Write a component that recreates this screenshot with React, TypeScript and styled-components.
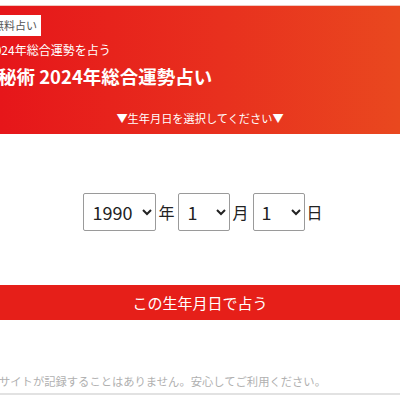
import React from "react"
import styled, { createGlobalStyle } from "styled-components"

const years = Array.from({ length: 100 }, (_, i) => 1930 + i)
const months = Array.from({ length: 12 }, (_, i) => i + 1)
const days = Array.from({ length: 31 }, (_, i) => i + 1)

const GlobalStyle = createGlobalStyle`
  html, body {
    margin: 0;
    padding: 0;
    background: #fff;
    font-family: "Noto Sans CJK JP", "Liberation Sans", sans-serif;
    overflow: hidden;
  }
`

const Page = styled.div`
  width: 400px;
  height: 400px;
  padding-top: 5px;
  box-sizing: border-box;
  display: flex;
  flex-direction: column;
`

const Header = styled.header`
  height: 129px;
  border-top: 1px solid #f0c8c0;
  background: linear-gradient(90deg, #e6161a 0%, #e8301e 55%, #e9481f 100%);
  color: #fff;
  display: flex;
  flex-direction: column;
  box-sizing: border-box;
  padding-top: 9px;
`

const Tag = styled.span`
  align-self: flex-start;
  margin-left: -11px;
  background: #fff;
  color: #555;
  font-size: 11px;
  line-height: 21px;
  padding: 0 4px;
`

const Sub = styled.p`
  margin: 5px 0 0 -12px;
  font-size: 12px;
  line-height: 18px;
`

const Title = styled.h1`
  margin: 4px 0 0 -2px;
  font-size: 18.5px;
  font-weight: 700;
  line-height: 26px;
`

const Guide = styled.p`
  margin: auto 0 7px;
  text-align: center;
  font-size: 11.2px;
  line-height: 18px;
`

const Form = styled.div`
  height: 151px;
  display: flex;
  align-items: center;
  justify-content: center;
  gap: 2px;
  padding-left: 8px;
  padding-top: 4px;
  box-sizing: border-box;
  font-size: 16px;
  color: #222;
`

const Select = styled.select<{ $w: number }>`
  width: ${(p) => p.$w}px;
  height: 38px;
  font-size: 18px;
  font-family: "Noto Sans CJK JP", "Liberation Sans", sans-serif;
  color: #222;
  border: 1px solid #9a9a9a;
  border-radius: 2px;
  background: #fff;
  padding: 0 4px;
`

const Unit = styled.span`
  margin-right: 2px;
`

const Button = styled.button`
  height: 35px;
  border: none;
  background: #e61f19;
  color: #fff;
  font-family: "Noto Sans CJK JP", "Liberation Sans", sans-serif;
  font-size: 15px;
  padding: 0;
`

const Note = styled.p`
  margin: 53px 0 0 -1px;
  padding-bottom: 4px;
  border-bottom: 2px solid #e2e2e2;
  font-size: 11.3px;
  line-height: 16px;
  color: #b0b0b0;
  white-space: nowrap;
`

export default function App() {
  return (
    <Page>
      <GlobalStyle />
      <Header>
        <Tag>無料占い</Tag>
        <Sub>2024年総合運勢を占う</Sub>
        <Title>秘術 2024年総合運勢占い</Title>
        <Guide>▼生年月日を選択してください▼</Guide>
      </Header>
      <Form>
        <Select $w={73} defaultValue={1990}>
          {years.map((y) => (
            <option key={y} value={y}>{y}</option>
          ))}
        </Select>
        <Unit>年</Unit>
        <Select $w={52} defaultValue={1}>
          {months.map((m) => (
            <option key={m} value={m}>{m}</option>
          ))}
        </Select>
        <Unit>月</Unit>
        <Select $w={52} defaultValue={1}>
          {days.map((d) => (
            <option key={d} value={d}>{d}</option>
          ))}
        </Select>
        <Unit>日</Unit>
      </Form>
      <Button>この生年月日で占う</Button>
      <Note>サイトが記録することはありません。安心してご利用ください。</Note>
    </Page>
  )
}
